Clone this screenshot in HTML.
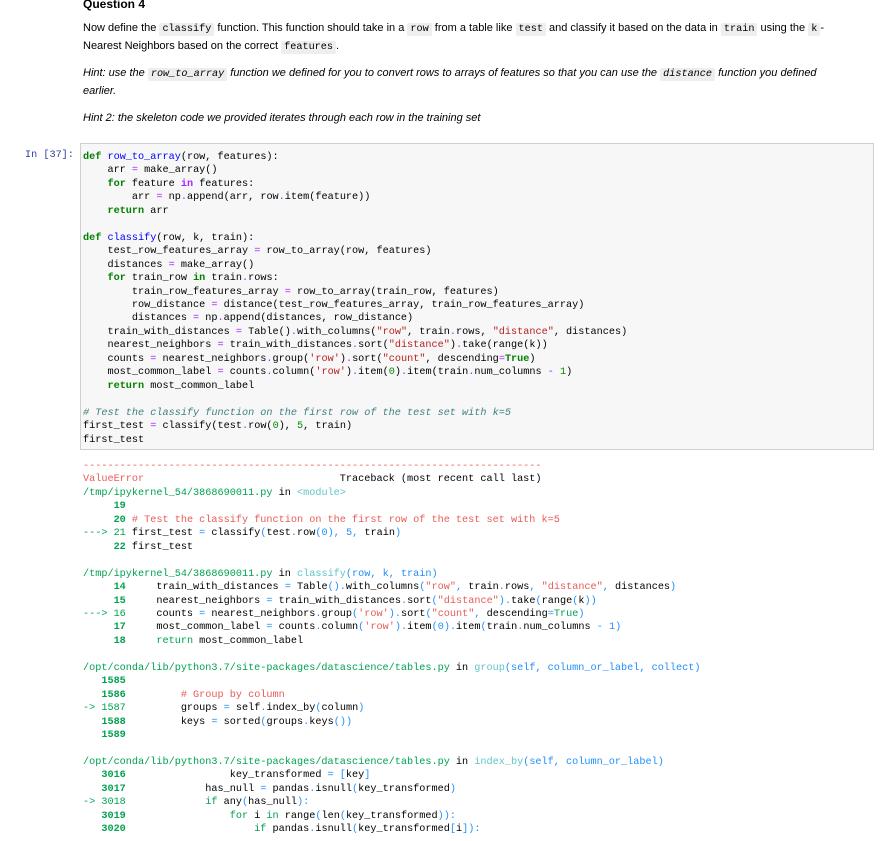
<!DOCTYPE html>
<html><head><meta charset="utf-8"><style>
body{margin:0;width:882px;height:841px;background:#fff;overflow:hidden;position:relative;font-family:"Liberation Sans",sans-serif;color:#000}
.md{position:absolute;left:83px;font-size:11px;line-height:17px;width:755px}
code{font-family:"Liberation Mono",monospace;font-size:10.2px;background:#eee;padding:1px 3px;border-radius:2px}
i code{font-style:italic}
.prompt{position:absolute;left:25px;top:150px;font-family:"Liberation Mono",monospace;font-size:10.2px;color:#303F9F}
.cell{position:absolute;left:80px;top:143px;width:794px;height:307px;background:#f7f7f7;border:1px solid #cfcfcf;box-sizing:border-box}
pre{margin:0;position:absolute;left:83px;font-family:"Liberation Mono",monospace;font-size:10.2px;line-height:13.45px;white-space:pre}
.k{color:#008000;font-weight:bold}.o{color:#AA22FF}.s{color:#BA2121}.n{color:#080}.c{color:#408080;font-style:italic}.f{color:#0000FF}
.r{color:#e75c58}.g{color:#00a250}.cy{color:#60c6c8}.ln{color:#00a250;font-weight:bold}.b{color:#208ffb}.t{color:#00a250}
</style></head><body>
<div class="md" style="top:-4px;font-weight:bold;font-size:12px">Question 4</div>
<div class="md" style="top:20px;width:770px">Now define the <code>classify</code> function. This function should take in a <code>row</code> from a table like <code>test</code> and classify it based on the data in <code>train</code> using the <code>k</code>-Nearest Neighbors based on the correct <code>features</code>.</div>
<div class="md" style="top:65px"><i>Hint: use the <code>row_to_array</code> function we defined for you to convert rows to arrays of features so that you can use the <code>distance</code> function you defined earlier.</i></div>
<div class="md" style="top:110px"><i>Hint 2: the skeleton code we provided iterates through each row in the training set</i></div>
<div class="prompt">In [37]:</div>
<div class="cell"></div>
<pre style="top:151px"><span class="k">def</span> <span class="f">row_to_array</span>(row, features):
    arr <span class="o">=</span> make_array()
    <span class="k">for</span> feature <span class="o k">in</span> features:
        arr <span class="o">=</span> np<span class="o">.</span>append(arr, row<span class="o">.</span>item(feature))
    <span class="k">return</span> arr

<span class="k">def</span> <span class="f">classify</span>(row, k, train):
    test_row_features_array <span class="o">=</span> row_to_array(row, features)
    distances <span class="o">=</span> make_array()
    <span class="k">for</span> train_row <span class="k">in</span> train<span class="o">.</span>rows:
        train_row_features_array <span class="o">=</span> row_to_array(train_row, features)
        row_distance <span class="o">=</span> distance(test_row_features_array, train_row_features_array)
        distances <span class="o">=</span> np<span class="o">.</span>append(distances, row_distance)
    train_with_distances <span class="o">=</span> Table()<span class="o">.</span>with_columns(<span class="s">"row"</span>, train<span class="o">.</span>rows, <span class="s">"distance"</span>, distances)
    nearest_neighbors <span class="o">=</span> train_with_distances<span class="o">.</span>sort(<span class="s">"distance"</span>)<span class="o">.</span>take(range(k))
    counts <span class="o">=</span> nearest_neighbors<span class="o">.</span>group(<span class="s">'row'</span>)<span class="o">.</span>sort(<span class="s">"count"</span>, descending<span class="o">=</span><span class="k">True</span>)
    most_common_label <span class="o">=</span> counts<span class="o">.</span>column(<span class="s">'row'</span>)<span class="o">.</span>item(<span class="n">0</span>)<span class="o">.</span>item(train<span class="o">.</span>num_columns <span class="o">-</span> <span class="n">1</span>)
    <span class="k">return</span> most_common_label

<span class="c"># Test the classify function on the first row of the test set with k=5</span>
first_test <span class="o">=</span> classify(test<span class="o">.</span>row(<span class="n">0</span>), <span class="n">5</span>, train)
first_test</pre>
<pre style="top:460px"><span class="r">---------------------------------------------------------------------------</span>
<span class="r">ValueError</span>                                Traceback (most recent call last)
<span class="g">/tmp/ipykernel_54/3868690011.py</span> in <span class="cy">&lt;module&gt;</span>
<span class="ln">     19</span> 
<span class="ln">     20</span> <span class="r"># Test the classify function on the first row of the test set with k=5</span>
<span class="g">---&gt; 21</span> first_test <span class="b">=</span> classify<span class="b">(</span>test<span class="b">.</span>row<span class="b">(</span><span class="b">0</span><span class="b">)</span><span class="b">,</span> <span class="b">5</span><span class="b">,</span> train<span class="b">)</span>
<span class="ln">     22</span> first_test

<span class="g">/tmp/ipykernel_54/3868690011.py</span> in <span class="cy">classify</span><span class="b">(row, k, train)</span>
<span class="ln">     14</span>     train_with_distances <span class="b">=</span> Table<span class="b">().</span>with_columns<span class="b">(</span><span class="r">"row"</span><span class="b">,</span> train<span class="b">.</span>rows<span class="b">,</span> <span class="r">"distance"</span><span class="b">,</span> distances<span class="b">)</span>
<span class="ln">     15</span>     nearest_neighbors <span class="b">=</span> train_with_distances<span class="b">.</span>sort<span class="b">(</span><span class="r">"distance"</span><span class="b">).</span>take<span class="b">(</span>range<span class="b">(</span>k<span class="b">))</span>
<span class="g">---&gt; 16</span>     counts <span class="b">=</span> nearest_neighbors<span class="b">.</span>group<span class="b">(</span><span class="r">'row'</span><span class="b">).</span>sort<span class="b">(</span><span class="r">"count"</span><span class="b">,</span> descending<span class="b">=</span><span class="t">True</span><span class="b">)</span>
<span class="ln">     17</span>     most_common_label <span class="b">=</span> counts<span class="b">.</span>column<span class="b">(</span><span class="r">'row'</span><span class="b">).</span>item<span class="b">(</span><span class="b">0</span><span class="b">).</span>item<span class="b">(</span>train<span class="b">.</span>num_columns <span class="b">-</span> <span class="b">1</span><span class="b">)</span>
<span class="ln">     18</span>     <span class="t">return</span> most_common_label

<span class="g">/opt/conda/lib/python3.7/site-packages/datascience/tables.py</span> in <span class="cy">group</span><span class="b">(self, column_or_label, collect)</span>
<span class="ln">   1585</span> 
<span class="ln">   1586</span>         <span class="r"># Group by column</span>
<span class="g">-&gt; 1587</span>         groups <span class="b">=</span> self<span class="b">.</span>index_by<span class="b">(</span>column<span class="b">)</span>
<span class="ln">   1588</span>         keys <span class="b">=</span> sorted<span class="b">(</span>groups<span class="b">.</span>keys<span class="b">())</span>
<span class="ln">   1589</span> 

<span class="g">/opt/conda/lib/python3.7/site-packages/datascience/tables.py</span> in <span class="cy">index_by</span><span class="b">(self, column_or_label)</span>
<span class="ln">   3016</span>                 key_transformed <span class="b">=</span> <span class="b">[</span>key<span class="b">]</span>
<span class="ln">   3017</span>             has_null <span class="b">=</span> pandas<span class="b">.</span>isnull<span class="b">(</span>key_transformed<span class="b">)</span>
<span class="g">-&gt; 3018</span>             <span class="t">if</span> any<span class="b">(</span>has_null<span class="b">):</span>
<span class="ln">   3019</span>                 <span class="t">for</span> i <span class="t">in</span> range<span class="b">(</span>len<span class="b">(</span>key_transformed<span class="b">)):</span>
<span class="ln">   3020</span>                     <span class="t">if</span> pandas<span class="b">.</span>isnull<span class="b">(</span>key_transformed<span class="b">[</span>i<span class="b">]):</span></pre>
</body></html>
